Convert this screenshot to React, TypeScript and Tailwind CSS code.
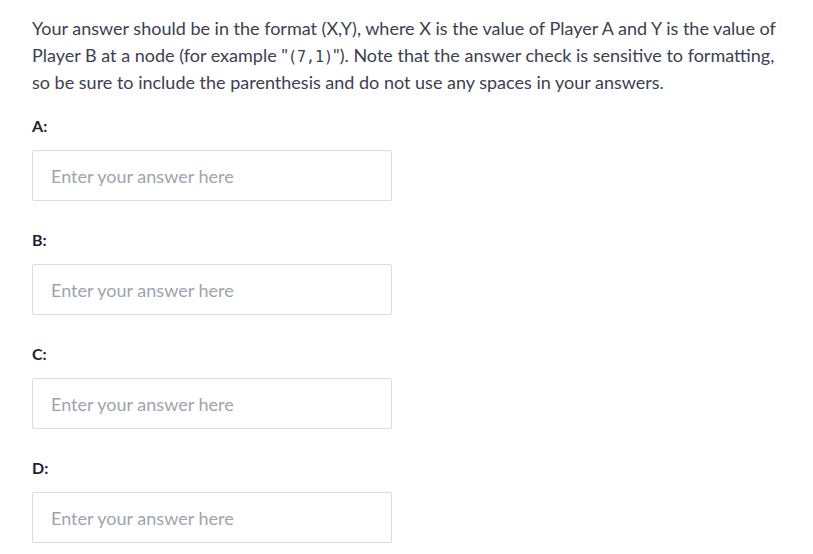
import React from 'react';

const AnswerField = ({ label }: { label: string }) => {
    return (
        <div className="flex flex-col">
            <label className="text-[16px] font-bold leading-[20px] text-[#1f2230]">{label}:</label>
            <input
                type="text"
                placeholder="Enter your answer here"
                className="mt-[14px] h-[51px] w-[360px] rounded-[2px] border border-[#dcdde4] bg-white pl-[18px] text-[18px] text-[#3b3f4e] placeholder:text-[#9ea3b0] focus:outline-none"
            />
        </div>
    );
};

export default function App() {
    return (
        <div className="min-h-screen bg-white px-[32px] pt-[15px] font-['Lato','Liberation_Sans',sans-serif] text-[#3c4050]">
            <p className="w-[752px] text-[18px] leading-[27px]">
                Your answer should be in the format (X,Y), where X is the value of Player A and Y is the value of Player B at a node (for example "
                <code className="font-['DejaVu_Sans_Mono',monospace] text-[15px] leading-none">(7,1)</code>
                "). Note that the answer check is sensitive to formatting, so be sure to include the parenthesis and do not use any spaces in your answers.
            </p>
            <div className="mt-[20px] flex flex-col gap-[29px]">
                {['A', 'B', 'C', 'D'].map((l) => (
                    <AnswerField key={l} label={l} />
                ))}
            </div>
        </div>
    );
}
